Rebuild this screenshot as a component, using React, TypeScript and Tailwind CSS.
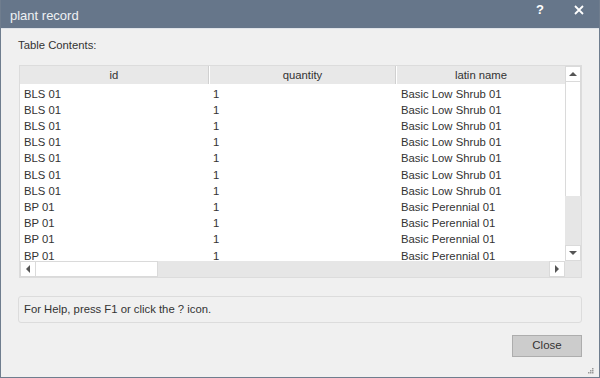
import React from 'react'

const rows = [
  ...Array.from({ length: 7 }, () => ({ id: 'BLS 01', qty: '1', latin: 'Basic Low Shrub 01' })),
  ...Array.from({ length: 4 }, () => ({ id: 'BP 01', qty: '1', latin: 'Basic Perennial 01' })),
]

function Arrow({ dir }: { dir: 'up' | 'down' | 'left' | 'right' }) {
  const pts = {
    up: '0,5 4,1 8,5',
    down: '0,1 4,5 8,1',
    left: '5,0 1,4 5,8',
    right: '1,0 5,4 1,8',
  }[dir]
  const vertical = dir === 'up' || dir === 'down'
  return (
    <svg width={vertical ? 8 : 6} height={vertical ? 6 : 8} viewBox={vertical ? '0 0 8 6' : '0 0 6 8'}>
      <polygon points={pts} fill="#555" />
    </svg>
  )
}

function ScrollButton({ dir }: { dir: 'up' | 'down' | 'left' | 'right' }) {
  return (
    <div className="flex h-[16px] w-[16px] items-center justify-center border border-[#dadada] bg-white">
      <Arrow dir={dir} />
    </div>
  )
}

export default function App() {
  return (
    <div
      className="flex h-[378px] w-[600px] flex-col border-x border-b border-[#6f7d8e] bg-[#f0f0f0] text-[11.3px] text-[#333]"
      style={{ fontFamily: '"Liberation Sans", Arial, sans-serif' }}
    >
      <div className="flex h-[29px] shrink-0 items-center border-b border-[#dfe3e8] bg-[#66768a] pl-[9px] pt-[4px] text-white">
        <span className="text-[13px] text-[#eef1f4]">plant record</span>
        <span className="ml-auto mr-[30px] -mt-[12px] text-[13px] font-bold">?</span>
        <svg className="mr-[15px] -mt-[12px]" width="10" height="10" viewBox="0 0 10 10">
          <path d="M1 1l8 8M9 1L1 9" stroke="#fff" strokeWidth="1.8" />
        </svg>
      </div>

      <div className="flex flex-1 flex-col px-[17px]">
        <div className="mt-[9px] h-[14px] leading-[14px]">Table Contents:</div>

        <div className="mt-[13px] ml-[1px] grid h-[213px] grid-cols-[1fr_16px] grid-rows-[1fr_16px] border border-[#dcdcdc] bg-[#e6e6e6]">
          <div className="overflow-hidden bg-white">
            <div className="flex h-[18px] bg-[#e8e8e8] text-[#333]">
              <div className="flex w-[189px] items-center justify-center border-r border-[#d0d0d0]">id</div>
              <div className="flex w-[187px] items-center justify-center border-r border-[#d0d0d0] border-l border-l-white">quantity</div>
              <div className="flex flex-1 items-center justify-center border-l border-white">latin name</div>
            </div>
            <div className="pt-[2px]">
              {rows.map((r, i) => (
                <div key={i} className="flex h-[16.2px] items-center">
                  <div className="w-[189px] pl-[4px]">{r.id}</div>
                  <div className="w-[188px] pl-[4px]">{r.qty}</div>
                  <div className="flex-1 pl-[4px] whitespace-nowrap">{r.latin}</div>
                </div>
              ))}
            </div>
          </div>

          <div className="flex flex-col bg-[#e6e6e6]">
            <ScrollButton dir="up" />
            <div className="h-[114px] border-x border-[#dadada] bg-white" />
            <div className="flex-1" />
            <ScrollButton dir="down" />
          </div>

          <div className="flex bg-[#e6e6e6]">
            <ScrollButton dir="left" />
            <div className="w-[122px] border-y border-r border-[#dadada] bg-white" />
            <div className="flex-1" />
            <ScrollButton dir="right" />
          </div>
          <div className="bg-[#e6e6e6]" />
        </div>

        <div className="mt-[18px] flex h-[27px] items-center rounded-[3px] border border-[#dcdcdc] pl-[5px]">
          For Help, press F1 or click the ? icon.
        </div>

        <div className="mt-[12px] flex justify-end">
          <button className="h-[22px] w-[70px] border border-[#adadad] bg-[#cccccc] text-[11.5px] text-[#333]">
            Close
          </button>
        </div>

        <div className="mt-auto mb-[3px] -mr-[12px] flex justify-end">
          <svg width="6" height="6" viewBox="0 0 6 6">
            <rect x="4" y="0" width="1.5" height="1.5" fill="#999" />
            <rect x="2" y="2" width="1.5" height="1.5" fill="#999" />
            <rect x="4" y="2" width="1.5" height="1.5" fill="#999" />
            <rect x="0" y="4" width="1.5" height="1.5" fill="#999" />
            <rect x="2" y="4" width="1.5" height="1.5" fill="#999" />
            <rect x="4" y="4" width="1.5" height="1.5" fill="#999" />
          </svg>
        </div>
      </div>
    </div>
  )
}
